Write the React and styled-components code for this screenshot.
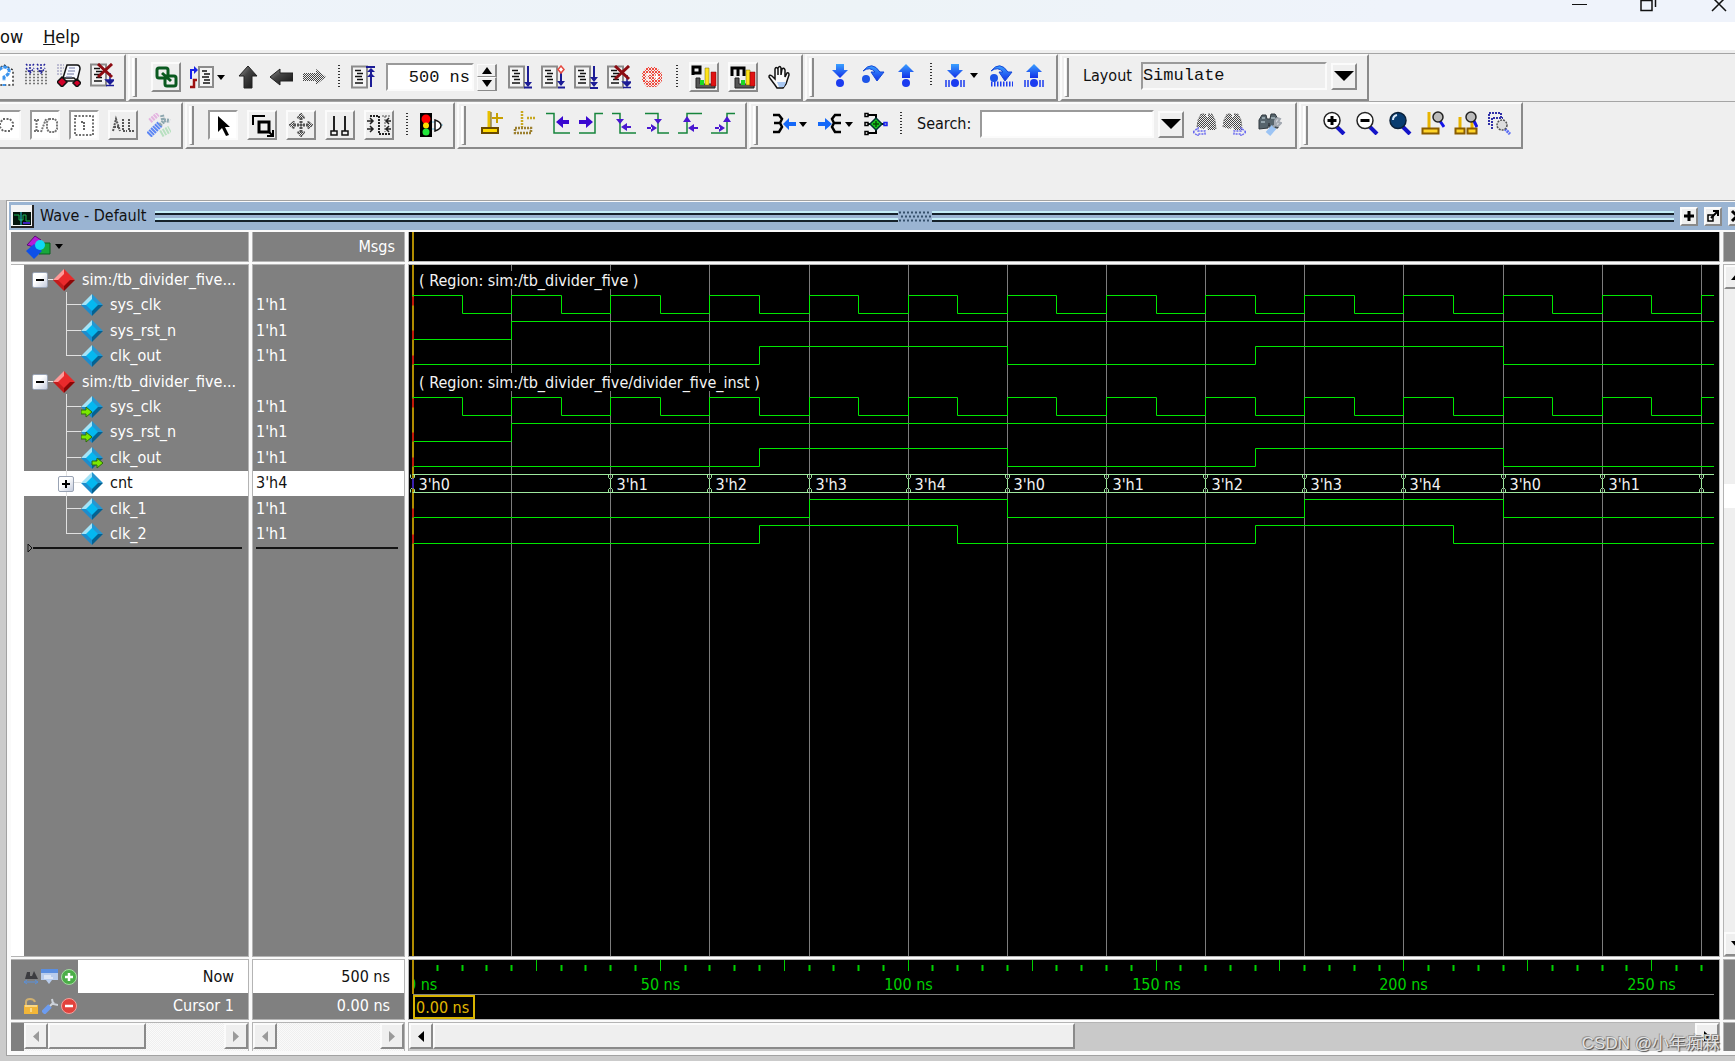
import styled, { createGlobalStyle, css } from "styled-components";

const GlobalStyle = createGlobalStyle`
  *, *::before, *::after {
    box-sizing: border-box;
  }

  body {
    margin: 0;
    overflow: hidden;
    background: #efefef;
    color: #111;
    font-family: "DejaVu Sans Condensed", "Noto Sans", sans-serif;
    font-size: 16px;
    line-height: 20px;
  }

  button, input, select {
    font: inherit;
    color: inherit;
    margin: 0;
    padding: 0;
    border: 0;
    background: none;
  }
`;

const raised = css`
  border: 2px solid;
  border-color: #fbfbfb #8a8a8a #8a8a8a #fbfbfb;
  background: #efefef;
`;

const sunken = css`
  border: 2px solid;
  border-color: #9a9a9a #fbfbfb #fbfbfb #9a9a9a;
  background: #fff;
`;

/* ---------- frame ---------- */

const Shell = styled.div`
  display: flex;
  flex-direction: column;
  height: 100vh;
  overflow: hidden;
`;

const TitleBar = styled.header`
  display: flex;
  flex: none;
  justify-content: flex-end;
  gap: 46px;
  height: 22px;
  padding-right: 4px;
  background: linear-gradient(90deg, #eef3fb, #edf3f7 50%, #eff3fb 80%);
`;

const CaptionButton = styled.button`
  display: flex;
  width: 24px;
  height: 14px;
`;

const MenuBar = styled.nav`
  display: flex;
  flex: none;
  gap: 20px;
  height: 28px;
  background: #fff;
`;

const MenuItem = styled.button`
  font-size: 18px;
  line-height: 30px;

  &::first-letter {
    text-decoration: ${(p) => (p.$hotkey ? "underline" : "none")};
  }
`;

const ToolArea = styled.div`
  flex: none;
  height: 150px;
  border-top: 3px solid #efefef;
`;

const ToolRow = styled.div`
  display: flex;
  gap: 2px;
  height: 48px;
  border-top: 1px solid #a5a5a5;
`;

const Toolbar = styled.div`
  display: flex;
  flex: none;
  padding-right: 10px;
  border: 2px solid;
  border-color: #fbfbfb #8a8a8a #8a8a8a #fbfbfb;

  &:first-child {
    border-left: 0;
  }
`;

const Grip = styled.div`
  flex: none;
  width: 5px;
  margin: 2px 14px 2px 2px;
  border: solid;
  border-width: 0 2px 1px 2px;
  border-color: #fff #8a8a8a #8a8a8a #fff;
`;

const Tools = styled.div`
  display: flex;
  align-items: center;
  align-self: flex-start;
  gap: 9px;
  margin-top: 6px;
  margin-left: ${(p) => (p.$cut ? "-9px" : 0)};
`;

const Group = styled.div`
  display: flex;
  align-items: center;
  gap: ${(p) => p.$gap || 0}px;
  margin: 0 ${(p) => p.$space || 0}px;
`;

const IconButton = styled.button`
  display: flex;
  flex: none;
  width: 24px;
  height: 26px;
  align-items: center;
  justify-content: center;
`;

const BoxButton = styled.button`
  display: flex;
  flex: none;
  width: 30px;
  height: 30px;
  align-items: center;
  justify-content: center;
  ${(p) => (p.$pressed ? sunken : raised)}
`;

const CaretButton = styled(IconButton)`
  width: 13px;
`;

const Divider = styled.div`
  width: 2px;
  height: 24px;
  margin: 0 2px 0 3px;
  background: repeating-linear-gradient(#333 0 1px, transparent 1px 3px);
`;

const RunLength = styled.input`
  width: 88px;
  height: 28px;
  padding-right: 2px;
  font-family: "Liberation Mono", monospace;
  font-size: 17px;
  text-align: right;
  ${sunken}
`;

const Spinner = styled.div`
  display: grid;
  width: 20px;
  height: 27px;
  grid-template-rows: 1fr 1fr;
`;

const SpinButton = styled.button`
  display: flex;
  align-items: center;
  justify-content: center;
  ${raised}
  border-width: 1px 2px 1px 1px;
`;

const FieldLabel = styled.label`
  margin: 0 9px 0 ${(p) => p.$indent || 0}px;
`;

const LayoutSelect = styled.select`
  width: 186px;
  height: 28px;
  appearance: none;
  font-family: "Liberation Mono", monospace;
  font-size: 17px;
  ${sunken}
  background: #efefef;
`;

const SearchInput = styled.input`
  width: 174px;
  height: 28px;
  ${sunken}
`;

const DropButton = styled.button`
  display: flex;
  width: 26px;
  height: 27px;
  margin-left: 4px;
  align-items: center;
  justify-content: center;
  ${raised}
`;

/* ---------- wave window ---------- */

const Workspace = styled.main`
  display: flex;
  flex: 1;
  min-height: 0;
  padding: 0 0 5px 6px;
  background: #cbcbcb;
`;

const WaveWindow = styled.section`
  display: flex;
  flex: 1;
  flex-direction: column;
  min-width: 0;
  padding: 1px 0 4px 2px;
  overflow: hidden;
  border: solid #a2a2a2;
  border-width: 1px 0 1px 1px;
  background: #fafafa;
`;

const WaveTitle = styled.div`
  display: flex;
  flex: none;
  align-items: center;
  height: 28px;
  margin-right: -11px;
  padding-left: 2px;
  background: #9ab4d2;
`;

const WaveName = styled.h1`
  margin: 0 9px 0 6px;
  font-size: 16px;
  font-weight: 400;
`;

const Rails = styled.div`
  display: flex;
  flex: 1;
  height: 13px;
  align-items: center;
  justify-content: center;
  background: linear-gradient(
    transparent 0 1px, #c3edf7 1px 3px, #16222c 3px 5px, transparent 5px 8px,
    #c3edf7 8px 10px, #16222c 10px 12px, transparent 12px
  );
`;

const Panes = styled.div`
  display: grid;
  flex: 1;
  min-height: 0;
  grid-template-columns: 237px 151px minmax(0, 1fr) 11px;
  gap: 5px;
  margin: 2px 0 0 2px;
  overflow: hidden;
`;

const Pane = styled.div`
  display: grid;
  min-width: 0;
  min-height: 0;
  grid-template-rows: 29px minmax(0, 1fr) 59px 28px;
  gap: 4px;
`;

const Cell = styled.div`
  position: relative;
  min-width: 0;
  min-height: 0;
  overflow: hidden;
  outline: 1px solid #b4b4b4;
  background: ${(p) => (p.$dark ? "#000" : "#808080")};
  color: #fff;
`;

const HeadCell = styled(Cell)`
  display: flex;
  align-items: center;
  padding: 0 9px 0 15px;
  justify-content: ${(p) => (p.$end ? "flex-end" : "flex-start")};
`;

const ListCell = styled(Cell)`
  border-left: ${(p) => (p.$margin ? "13px solid #fff" : 0)};
`;

const Rows = styled.ul`
  display: grid;
  height: 280px;
  margin: 2px 0 0;
  padding: 0;
  grid-auto-rows: 1fr;
  list-style: none;
`;

const SignalRow = styled.li`
  display: flex;
  align-items: center;
  padding-left: ${(p) => (p.$group ? 8 : 42)}px;
  background: ${(p) => (p.$selected ? "#fff" : "transparent")};
  color: ${(p) => (p.$selected ? "#111" : "#fff")};
`;

const ValueRow = styled(SignalRow)`
  padding-left: 3px;
`;

const Label = styled.span`
  margin-left: 7px;
  white-space: pre;
`;

const Expander = styled.button`
  display: flex;
  width: 16px;
  height: 16px;
  flex: none;
  align-items: center;
  justify-content: center;
  border: 1px solid #99a3b4;
  border-radius: 2px;
  background: linear-gradient(135deg, #fff 40%, #c4cbdc);
`;

const Stub = styled.span`
  width: 5px;
  height: 1px;
  background: #e6e6e6;
`;

const Branch = styled.span`
  position: relative;
  display: grid;
  width: 15px;
  align-self: stretch;
  grid-template-rows: 1fr 1fr;

  &::before {
    content: "";
    border: solid #e0e0e0;
    border-width: 0 0 1px 1px;
  }

  &::after {
    content: "";
    border-left: ${(p) => (p.$last ? "0" : "1px solid #e0e0e0")};
  }

  ${Expander} {
    position: absolute;
    top: 50%;
    left: -8px;
    margin-top: -7px;
  }
`;

const EndMark = styled.div`
  display: flex;
  height: 10px;
  align-items: center;
  margin: -4px 6px 0 3px;

  &::after {
    content: "";
    flex: 1;
    height: 2px;
    background: #141414;
  }
`;

const FootCell = styled(Cell)`
  display: grid;
  grid-template-rows: 33px 1fr;
`;

const FootRow = styled.div`
  display: flex;
  align-items: stretch;
  color: ${(p) => (p.$now ? "#111" : "#fff")};
`;

const FootTools = styled.div`
  display: flex;
  width: 67px;
  align-items: center;
  justify-content: flex-end;
  gap: 2px;
  padding-right: 1px;
`;

const FootText = styled.div`
  display: flex;
  flex: 1;
  align-items: center;
  justify-content: flex-end;
  padding-right: 14px;
  background: ${(p) => (p.$now ? "#fff" : "transparent")};
`;

const SmallButton = styled.button`
  display: flex;
  width: 17px;
  height: 20px;
  align-items: center;
  justify-content: center;
`;

const ScrollCell = styled(Cell)`
  display: flex;
  padding-bottom: 2px;
  border-left: ${(p) => (p.$margin ? "13px solid #808080" : 0)};
  background: ${(p) =>
    p.$active
      ? "#c9c9c9"
      : "repeating-conic-gradient(#fafafa 0 25%, #efefef 0 50%) 0 0 / 2px 2px"};
`;

const ScrollButton = styled.button`
  display: flex;
  width: 24px;
  flex: none;
  align-items: center;
  justify-content: center;
  ${raised}
`;

const Thumb = styled.div`
  width: ${(p) => p.$size};
  ${raised}
`;

const Trough = styled.div`
  flex: 1;
`;

const VScroll = styled(Cell)`
  display: flex;
  flex-direction: column;
  background: #efefef;
`;

const VButton = styled.button`
  display: flex;
  width: 24px;
  height: 24px;
  flex: none;
  align-items: center;
  justify-content: center;
  ${raised}
`;

const VGap = styled.div`
  flex: ${(p) => p.$grow};
  background: ${(p) => (p.$white ? "#fff" : "transparent")};
`;

const Plot = styled.svg`
  display: block;
  width: 100%;
  height: 100%;
  font-size: 16px;
`;

const PlotInset = styled.div`
  height: 100%;
  padding-right: 5px;
`;

const PaneButton = styled.button`
  display: flex;
  width: 18px;
  height: 19px;
  flex: none;
  margin-left: 6px;
  align-items: center;
  justify-content: center;
  ${raised}
`;

const Watermark = styled.div`
  position: absolute;
  right: 15px;
  bottom: 6px;
  color: #e2e2e2;
  font: 17px/22px "Liberation Sans", "Noto Sans CJK SC", sans-serif;
  text-shadow: 1px 1px 1px #444, -1px -1px 0 #999;
  pointer-events: none;
`;

/* ---------- icons ---------- */

const Icon = ({ size = 24, w, h, children }) => (
  <svg
    width={w || size}
    height={h || size}
    viewBox={`0 0 ${w || size} ${h || size}`}
    fill="none"
    aria-hidden="true"
  >
    {children}
  </svg>
);

const Caret = () => (
  <Icon w={8} h={5}>
    <path d="M0 0h8L4 5z" fill="#000" />
  </Icon>
);

const Triangle = ({ dir, color = "#000", w = 12, h = 8 }) => {
  const shapes = {
    up: `M0 ${h}H${w}L${w / 2} 0z`,
    down: `M0 0H${w}L${w / 2} ${h}z`,
    left: `M${w} 0V${h}L0 ${h / 2}z`,
    right: `M0 0V${h}L${w} ${h / 2}z`,
  };
  return (
    <Icon w={w} h={h}>
      <path d={shapes[dir]} fill={color} />
    </Icon>
  );
};

const Sheet = ({ x = 1 }) => (
  <>
    <path d={`M${x} 1.500h15v21h-15z`} fill="#f4f4f4" stroke="#8c8c8c" strokeWidth="2" />
    <path
      d={`M${x + 3} 5.500h6M${x + 5} 8.500h6M${x + 3} 11.500h7M${x + 5} 14.500h6M${x + 3} 18h8`}
      stroke="#111"
      strokeWidth="1.500"
    />
  </>
);

const icons = {
  help: (
    <Icon>
      <path d="M5 22V8l8-6 9 5v15z" fill="#fff" stroke="#333" strokeWidth="1.500" strokeDasharray="2 2" />
      <path d="M8 7q6-6 10 0q1 4-5 7v4M13 21v2" stroke="#3a93ee" strokeWidth="3" strokeDasharray="4 1" />
    </Icon>
  ),
  load: (
    <Icon>
      <path d="M1 8.500h22M1 11.500h22M1 14.500h22M1 17.500h22M1 20.500h22" stroke="#777" strokeWidth="1.500" strokeDasharray="2 2" />
      <path d="M6 1v8M2 5l4 5 4-5M17 1v8M13 5l4 5 4-5M2 1l2 2M10 1L8 3M13 1l2 2M21 1l-2 2" stroke="#26269c" strokeWidth="1.500" strokeDasharray="2 1" />
    </Icon>
  ),
  cart: (
    <Icon>
      <path d="M10 2h10q3 0 3 4l-3 12-3-3H6z" fill="#f6f8ff" stroke="#111" strokeWidth="1.500" />
      <path d="M12 5h6M11 8h7M10 11h7M9 14h6" stroke="#6f76a0" />
      <path d="M0 2h7M0 5h7M0 8h6M0 11h5" stroke="#8a8ab4" strokeDasharray="2 1" />
      <path d="M3 18h17" stroke="#111" strokeWidth="1.500" />
      <path d="M5 14l5 5-5 5-5-5zM20 16l4 4-4 4-4-4z" fill="#d00028" stroke="#111" strokeWidth="1.500" />
    </Icon>
  ),
  sheetX: (
    <Icon>
      <Sheet />
      <path d="M20 10v9M16 17h8l-4 4zM16 22.500h8" stroke="#1c1c96" strokeWidth="1.500" fill="#1c1c96" />
      <path d="M8 1l14 13M22 1L8 14" stroke="#8c0c12" strokeWidth="3" />
    </Icon>
  ),
  connect: (
    <Icon>
      <rect x="3" y="3" width="11" height="10" rx="2" stroke="#0a5a20" strokeWidth="3" />
      <rect x="11" y="11" width="11" height="10" rx="2" stroke="#0a5a20" strokeWidth="3" />
      <path d="M8 8l9 8" stroke="#0a5a20" strokeWidth="3" />
    </Icon>
  ),
  jump: (
    <Icon>
      <path d="M9 2h14v20H9z" fill="#f4f4f4" stroke="#8c8c8c" strokeWidth="2" />
      <path d="M12 6h5M14 9h6M12 12h7M14 15h6M13 18h7" stroke="#111" strokeWidth="1.500" />
      <path d="M1 14V5h3" stroke="#1822e8" strokeWidth="2" />
      <path d="M4 1l4 4-4 4z" fill="#1822e8" />
      <path d="M7 15H4v7H0" stroke="#9c1010" strokeWidth="2.500" />
    </Icon>
  ),
  up: (
    <Icon>
      <path d="M12 1l9 10h-5v12H8V11H3z" fill="url(#steel)" stroke="#222" />
    </Icon>
  ),
  left: (
    <Icon>
      <path d="M1 12L11 4v4h13v8H11v4z" fill="url(#steel)" stroke="#222" />
    </Icon>
  ),
  right: (
    <Icon>
      <path d="M24 12L14 4v4H1v8h13v4z" fill="url(#dots)" />
    </Icon>
  ),
  restart: (
    <Icon>
      <Sheet />
      <path d="M20 4v18M15 2h9" stroke="#1c1c96" strokeWidth="2" />
      <path d="M16 7l4-4 4 4zM16 12l4-4 4 4z" fill="#1c1c96" />
    </Icon>
  ),
  run: (
    <Icon>
      <Sheet />
      <path d="M20 1v18M16 22.500h8" stroke="#1c1c96" strokeWidth="2" />
      <path d="M16 17h8l-4 5z" fill="#1c1c96" />
    </Icon>
  ),
  runNext: (
    <Icon>
      <Sheet />
      <path d="M20 8v12M17 22.500h7" stroke="#1c1c96" strokeWidth="2" />
      <path d="M16 16h8l-4 5z" fill="#1c1c96" />
      <path d="M20 1l3 3.500L20 8l-3-3.500z" fill="#fff" stroke="#e64a40" strokeWidth="1.500" />
    </Icon>
  ),
  runAll: (
    <Icon>
      <Sheet />
      <path d="M20 1v14M16 23h8" stroke="#1c1c96" strokeWidth="2" />
      <path d="M16 12h8l-4 5zM16 17h8l-4 5z" fill="#1c1c96" />
    </Icon>
  ),
  stop: (
    <Icon>
      <path d="M7 2h9l6 6v8l-6 6H7l-5-6V8z" fill="url(#redDots)" />
      <path d="M7 9h4M7 9v6h4M14 12h5M16.500 9v6" stroke="#fff" strokeWidth="1.500" />
    </Icon>
  ),
  profile: (
    <Icon w={26} h={26}>
      <path d="M5 24V14h4v6h15v4z" fill="#555" stroke="#222" />
      <path d="M9 16h4v5H9z" fill="#19d824" />
      <path d="M14 4h4v17h-4z" fill="#ffe31a" stroke="#776c00" strokeWidth=".5" />
      <path d="M20 8h5v14h-5z" fill="#e01212" stroke="#700" strokeWidth=".5" />
      <path d="M2 11V3h7v6H3" stroke="#000" strokeWidth="3" />
    </Icon>
  ),
  memory: (
    <Icon w={26} h={26}>
      <path d="M5 24V14h4v6h15v4z" fill="#555" stroke="#222" />
      <path d="M11 16h4v5h-4z" fill="#19d824" />
      <path d="M16 6h4v15h-4z" fill="#ffe31a" stroke="#776c00" strokeWidth=".5" />
      <path d="M20 8h5v14h-5z" fill="#e01212" stroke="#700" strokeWidth=".5" />
      <path d="M2 12V4h12v8M8 4v8" stroke="#000" strokeWidth="3" />
    </Icon>
  ),
  hand: (
    <Icon>
      <path
        d="M8 20L2 12q0-3 3-1l3 3V4q1-3 3 0v6-7q2-3 3 0v7l1-6q2-2 3 1v7l2-4q2-1 2 2l-3 9-3 4H10z"
        fill="#fafafa"
        stroke="#111"
        strokeWidth="1.500"
      />
      <path d="M10 17h9l-2 5h-5z" fill="#a9c8f2" />
    </Icon>
  ),
  stepIn: (
    <Icon>
      <path d="M8 1h8v6h4l-8 8-8-8h4z" fill="url(#blue)" />
      <circle cx="12" cy="20" r="4" fill="#1b3cf0" />
    </Icon>
  ),
  stepOver: (
    <Icon>
      <path d="M2 8Q11-3 19 9h4l-7 9-6-9h4Q9 3 2 8z" fill="url(#blue)" stroke="#1447d8" />
      <circle cx="5" cy="16" r="4" fill="#1d55e8" />
    </Icon>
  ),
  stepOut: (
    <Icon>
      <path d="M12 1l8 8h-4v6H8V9H4z" fill="url(#blue)" />
      <circle cx="12" cy="20" r="4" fill="#1b3cf0" />
    </Icon>
  ),
  stepInBars: (
    <Icon>
      <path d="M8 1h8v6h4l-8 8-8-8h4z" fill="url(#blue)" />
      <circle cx="12" cy="20" r="4" fill="#1b3cf0" />
      <path d="M3 17v7M6 17v7M18 17v7M21 17v7" stroke="#1b3cf0" strokeWidth="1.500" />
    </Icon>
  ),
  stepOverBars: (
    <Icon>
      <path d="M2 8Q11-3 19 9h4l-7 9-6-9h4Q9 3 2 8z" fill="url(#blue)" stroke="#1447d8" />
      <circle cx="5" cy="15" r="4" fill="#1d55e8" />
      <path d="M2 21h22" stroke="#1b3cf0" strokeWidth="5" strokeDasharray="1.500 1.500" />
    </Icon>
  ),
  stepOutBars: (
    <Icon>
      <path d="M12 1l8 8h-4v6H8V9H4z" fill="url(#blue)" />
      <circle cx="12" cy="20" r="4" fill="#1b3cf0" />
      <path d="M3 17v7M6 17v7M18 17v7M21 17v7" stroke="#1b3cf0" strokeWidth="1.500" />
    </Icon>
  ),
  ring: (
    <Icon>
      <path d="M9 6h7l3 4v4l-3 4H9l-3-4v-4z" stroke="#666" strokeWidth="2" strokeDasharray="2 1.500" />
    </Icon>
  ),
  inOut: (
    <Icon w={26} h={24}>
      <path d="M2 7h5M4.500 7v11M2 18h5M9 19l5-13M17 6h6l2 3v7l-2 3h-6l-2-3V9z" stroke="#777" strokeWidth="2" strokeDasharray="2 1" />
    </Icon>
  ),
  internal: (
    <Icon>
      <path d="M3 3h18v19H3z" stroke="#444" strokeWidth="1.500" strokeDasharray="2 1.500" />
      <path d="M9 9h3v9" stroke="#666" strokeWidth="2" strokeDasharray="2 1" />
    </Icon>
  ),
  all: (
    <Icon>
      <path d="M2 18l3-12 4 12M3 14h5M12 6v12h4M18 6v12h5" stroke="#555" strokeWidth="2" strokeDasharray="2 1" />
    </Icon>
  ),
  tools: (
    <Icon>
      <path d="M3 8l8-7" stroke="#e4b4e0" strokeWidth="5" strokeDasharray="2 1" />
      <path d="M14 21l9-5" stroke="#b8e0c0" strokeWidth="7" strokeDasharray="2 1" />
      <path d="M2 22L13 11" stroke="#5c86f4" strokeWidth="7" strokeDasharray="2 .7" />
      <path d="M13 12l5-5M15 2l1 5 7 1" stroke="#8fa8b0" strokeWidth="4" strokeDasharray="2 1" />
    </Icon>
  ),
  pointer: (
    <Icon>
      <path d="M7 3v16l4-4 4 8 3-1-4-8h5z" fill="#000" />
    </Icon>
  ),
  zoomBox: (
    <Icon>
      <path d="M3 12V3h12" stroke="#000" strokeWidth="2" />
      <path d="M9 9h10v10H9z" stroke="#000" strokeWidth="3" />
      <path d="M18 18l5 5M23 17v6h-6" stroke="#000" strokeWidth="2" />
    </Icon>
  ),
  pan: (
    <Icon>
      <path d="M12 0l4 5H8zM12 24l4-5H8zM0 12l5-4v8zM24 12l-5-4v8z" fill="url(#dots)" stroke="#444" strokeDasharray="2 1" />
      <path d="M12 5v14M5 12h14" stroke="#555" strokeWidth="3" strokeDasharray="2 1" />
    </Icon>
  ),
  twoBars: (
    <Icon>
      <path d="M6 3v15M17 3v15" stroke="#222" strokeWidth="2" />
      <path d="M3 18h6v4H3zM14 18h6v4h-6z" stroke="#111" strokeWidth="1.500" />
    </Icon>
  ),
  editWave: (
    <Icon>
      <path d="M3 3h9v18h12" stroke="#222" strokeWidth="2" strokeDasharray="2 1" />
      <path d="M15 3h8M18 3v16" stroke="#555" strokeDasharray="2 1" />
      <path d="M0 8h5M0 16h5M19 8h5M19 16h5M3 5l3 3-3 3M3 13l3 3-3 3M22 5l-3 3 3 3M22 13l-3 3 3 3" stroke="#222" strokeWidth="1.500" />
    </Icon>
  ),
  light: (
    <Icon>
      <path d="M1 0h12v24H1z" fill="#000" />
      <circle cx="7" cy="6" r="4.500" fill="#f00" />
      <circle cx="7" cy="12.500" r="3" fill="#ffdf00" />
      <circle cx="7" cy="19" r="3.500" fill="#22e63a" />
      <path d="M13 9h3M13 16h3M21 12h3" stroke="#65b7d8" />
      <path d="M16 7v11q6-2 6-5.500T16 7z" fill="#fff" stroke="#111" strokeWidth="1.500" />
    </Icon>
  ),
  cursorAdd: (
    <Icon>
      <path d="M9 0v16" stroke="#e8c000" strokeWidth="3" />
      <path d="M11 1v15" stroke="#6b5500" />
      <path d="M2 17h16v5H2z" fill="#ffd900" stroke="#6b4b00" strokeWidth="2" />
      <path d="M17 2v10M12 7h11" stroke="#c8a000" strokeWidth="2" />
    </Icon>
  ),
  cursorDel: (
    <Icon>
      <path d="M9 0v16M14 7h8" stroke="#c8a820" strokeWidth="2.500" strokeDasharray="2 1" />
      <path d="M2 17h16v5H2z" stroke="#9c8030" strokeWidth="2.500" strokeDasharray="2 1" />
    </Icon>
  ),
  prevEdge: (
    <Icon>
      <path d="M0 2.500h8V22h16" stroke="#16853c" strokeWidth="1.500" />
      <path d="M10 11l7-6v4h6v4h-6v4z" fill="#3a08d0" />
    </Icon>
  ),
  nextEdge: (
    <Icon>
      <path d="M0 22h16V2.500h8" stroke="#16853c" strokeWidth="1.500" />
      <path d="M14 11L7 5v4H0v4h7v4z" fill="#3a08d0" />
    </Icon>
  ),
  prevFall: (
    <Icon>
      <path d="M0 2.500h8V22h16" stroke="#16853c" strokeWidth="1.500" />
      <path d="M4 8h8l-4 5zM9 16l6-4v8zM14 15h5v2h-5z" fill="#4a18d0" />
    </Icon>
  ),
  nextFall: (
    <Icon>
      <path d="M0 2.500h13V22h11" stroke="#16853c" strokeWidth="1.500" />
      <path d="M9 8h8l-4 5zM12 17l-6-4v8zM2 16h5v2H2z" fill="#4a18d0" />
    </Icon>
  ),
  prevRise: (
    <Icon>
      <path d="M0 22h9V2.500h15" stroke="#16853c" strokeWidth="1.500" />
      <path d="M5 11h8L9 5zM10 17l6-4v8zM15 16h5v2h-5z" fill="#4a18d0" />
    </Icon>
  ),
  nextRise: (
    <Icon>
      <path d="M0 22h16V2.500h8" stroke="#16853c" strokeWidth="1.500" />
      <path d="M12 11h8l-4-6zM14 17l-6-4v8zM4 16h5v2H4z" fill="#4a18d0" />
    </Icon>
  ),
  drivers: (
    <Icon>
      <path d="M1 3h6l3 4-2 4H2h6l2 4-3 5H1" stroke="#000" strokeWidth="2.500" />
      <path d="M11 12l6-6v4h7v4h-7v4z" fill="#1468f8" />
    </Icon>
  ),
  readers: (
    <Icon>
      <path d="M23 3h-6l-3 4 2 4h7-7l-2 4 3 5h6" stroke="#000" strokeWidth="2.500" />
      <path d="M14 12L7 6v4H0v4h7v4z" fill="#1468f8" />
    </Icon>
  ),
  expandNet: (
    <Icon>
      <path d="M4 3h8v18H4M4 12h16" stroke="#000" strokeWidth="2" />
      <path d="M1 1.500h3v3H1zM1 10.500h3v3H1zM1 19.500h3v3H1z" fill="#fff" stroke="#000" strokeWidth="1.500" />
      <path d="M12 6l6 6-6 6-6-6z" fill="#19c81c" stroke="#033" strokeWidth="1.500" />
      <path d="M12 9v6M9 12h6" stroke="#044c04" strokeWidth="1.500" />
      <path d="M20 10.500h3v3h-3z" fill="#9ac" stroke="#1a22f0" strokeWidth="1.500" />
    </Icon>
  ),
  findPrev: (
    <Icon>
      <path d="M4 15l1-7 3-6h5v3h2V2h4l3 6 1 10h-8l-1-4-3 3z" fill="url(#dots)" />
      <path d="M4 15l1-7 3-6h4M15 2h4l3 6 1 9" stroke="#777" strokeDasharray="2 1" />
      <path d="M0 20l5-4v3h7v3H5v2z" stroke="#6a6af0" strokeWidth="1.500" strokeDasharray="2 1" />
    </Icon>
  ),
  findNext: (
    <Icon>
      <path d="M1 15l1-7 3-6h5v3h2V2h4l3 6 1 10h-8l-1-4-3 3z" fill="url(#dots)" />
      <path d="M1 15l1-7 3-6h4M12 2h4l3 6 1 8" stroke="#777" strokeDasharray="2 1" />
      <path d="M24 20l-5-4v3h-7v3h7v2z" stroke="#6a6af0" strokeWidth="1.500" strokeDasharray="2 1" />
    </Icon>
  ),
  findOptions: (
    <Icon>
      <path d="M1 17V8l3-5h4l1 4h3l1-5h4l3 5v9h-8l-1-5-1 5z" fill="#56646c" stroke="#30383e" />
      <path d="M3 10h4M4 6h3M13 6h4" stroke="#a8b8c0" strokeWidth="1.500" />
      <path d="M10 22l6-7" stroke="#9cc4f4" strokeWidth="6" />
      <path d="M15 15l4-4M17 9q1-4 5-2l-2 3 3 1-3 3-3-1z" stroke="#a2a8b0" strokeWidth="2" fill="#d0d4da" />
    </Icon>
  ),
  zoomIn: (
    <Icon>
      <path d="M15 16l7 7" stroke="#1414c8" strokeWidth="4" />
      <circle cx="10" cy="9.500" r="8" fill="#fff" stroke="#222" strokeWidth="1.500" />
      <path d="M5.500 9.500h9M10 5v9" stroke="#000" strokeWidth="3" />
    </Icon>
  ),
  zoomOut: (
    <Icon>
      <path d="M15 16l7 7" stroke="#1414c8" strokeWidth="4" />
      <circle cx="10" cy="9.500" r="8" fill="#fff" stroke="#222" strokeWidth="1.500" />
      <path d="M5.500 9.500h9" stroke="#000" strokeWidth="3" />
    </Icon>
  ),
  zoomFull: (
    <Icon>
      <path d="M15 16l7 7" stroke="#1414c8" strokeWidth="4" />
      <circle cx="10" cy="9.500" r="8" fill="#083c70" stroke="#0a2038" strokeWidth="1.500" />
      <path d="M5 9q0-4 4-5" stroke="#d8e8f8" strokeWidth="2" />
    </Icon>
  ),
  zoomCursor: (
    <Icon>
      <path d="M8 1v16" stroke="#e8b400" strokeWidth="3" />
      <path d="M1.500 17.500h16v5h-16z" fill="#ffd428" stroke="#8a5c00" strokeWidth="2" />
      <path d="M19 10l4 6" stroke="#1414e8" strokeWidth="3" />
      <circle cx="17" cy="6" r="5" fill="#bbb" stroke="#222" strokeWidth="1.500" />
    </Icon>
  ),
  zoomCursors: (
    <Icon>
      <path d="M6 6v12M18 8v10" stroke="#e8b400" strokeWidth="3" />
      <path d="M1.500 17.500h9v5h-9zM13.500 17.500h9v5h-9z" fill="#ffd428" stroke="#8a5c00" strokeWidth="2" />
      <path d="M20 10l3 6" stroke="#1414e8" strokeWidth="3" />
      <circle cx="17" cy="6" r="5" fill="#bbb" stroke="#222" strokeWidth="1.500" />
    </Icon>
  ),
  zoomArea: (
    <Icon>
      <path d="M2 14V2h12v5M5 18V7h11" stroke="#3030a8" strokeWidth="2" strokeDasharray="2 1" />
      <path d="M18 18l5 5" stroke="#5a6cf4" strokeWidth="3" strokeDasharray="2 .7" />
      <circle cx="15" cy="14" r="5" fill="#ddd" stroke="#555" strokeWidth="1.500" strokeDasharray="2 1" />
    </Icon>
  ),
};

const HiddenSvg = styled.svg`
  position: absolute;
`;

const Defs = () => (
  <HiddenSvg width="0" height="0" aria-hidden="true">
    <defs>
      <linearGradient id="steel" x1="0" y1="0" x2="1" y2="1">
        <stop offset="0" stopColor="#999" />
        <stop offset=".4" stopColor="#444" />
        <stop offset="1" stopColor="#111" />
      </linearGradient>
      <linearGradient id="blue" x1="0" y1="0" x2="0" y2="1">
        <stop offset="0" stopColor="#3aa0ff" />
        <stop offset="1" stopColor="#1230e8" />
      </linearGradient>
      <pattern id="dots" width="2" height="2" patternUnits="userSpaceOnUse">
        <path d="M0 0h1v1H0zM1 1h1v1H1z" fill="#444" />
      </pattern>
      <pattern id="redDots" width="3" height="3" patternUnits="userSpaceOnUse">
        <path d="M0 0h2v2H0zM2 2h1v1H2z" fill="#f04a3e" />
      </pattern>
    </defs>
  </HiddenSvg>
);

const gem = {
  blue: ["#a4e4f8", "#2596d0", "#1e8ccc", "#046292", "#04b8f0"],
  red: ["#ff9a98", "#e62c2c", "#c41c1c", "#8c0606", "#ea2a2c"],
};

const Gem = ({ color, port }) => {
  const [nw, ne, sw, se, mid] = gem[color];
  return (
    <Icon size={22}>
      <path d="M11 0v11H0z" fill={nw} />
      <path d="M11 0v11h11z" fill={ne} />
      <path d="M0 11h11v11z" fill={sw} />
      <path d="M22 11H11v11z" fill={se} />
      <path d="M11 5l6 6-6 6-6-6z" fill={mid} />
      {port === "in" && <path d="M0 14h5v-3l6 5-6 5v-3H0z" fill="#7be800" stroke="#2e6a10" />}
      {port === "out" && <path d="M11 14h5v-3l6 5-6 5v-3h-5z" fill="#7be800" stroke="#2e6a10" />}
    </Icon>
  );
};

const WaveLogo = () => (
  <Icon w={23} h={23}>
    <path d="M0 0h22v22H0z" fill="#f4f4f4" />
    <path d="M22 0v22H0" stroke="#222" strokeWidth="2" />
    <path d="M2 7h18v13H2z" fill="#04140c" />
    <path d="M3 10h5v5h4v-5h3v6h4" stroke="#18b050" />
    <path d="M10 7v13" stroke="#20c8d8" />
    <path d="M12 18h7" stroke="#4020c0" strokeWidth="2" />
  </Icon>
);

const ShapesIcon = () => (
  <Icon w={26} h={24}>
    <path d="M1 10l8-9 6 4-7 7z" fill="#b41cd8" stroke="#5c0a78" />
    <path d="M13 8h11v11H13z" fill="#18a83c" stroke="#0a6020" />
    <path d="M8 9l8 7-8 8-8-8z" fill="#0e50e8" />
    <circle cx="14" cy="10" r="5" fill="#10d8f4" />
  </Icon>
);

/* ---------- data ---------- */

const signals = [
  { name: "sim:/tb_divider_five...", group: true, region: "( Region: sim:/tb_divider_five )", cover: 230 },
  { name: "sys_clk", value: "1'h1", kind: "clock" },
  { name: "sys_rst_n", value: "1'h1", start: 0, edges: [20] },
  { name: "clk_out", value: "1'h1", start: 0, edges: [70, 120, 170, 220], last: true },
  { name: "sim:/tb_divider_five...", group: true, region: "( Region: sim:/tb_divider_five/divider_five_inst )", cover: 358 },
  { name: "sys_clk", value: "1'h1", kind: "clock", port: "in" },
  { name: "sys_rst_n", value: "1'h1", start: 0, edges: [20], port: "in" },
  { name: "clk_out", value: "1'h1", start: 0, edges: [70, 120, 170, 220], port: "out" },
  { name: "cnt", value: "3'h4", kind: "bus", selected: true },
  { name: "clk_1", value: "1'h1", start: 0, edges: [80, 120, 180, 220] },
  { name: "clk_2", value: "1'h1", start: 0, edges: [70, 110, 170, 210], last: true },
];

const clockEdges = Array.from({ length: 26 }, (_, i) => (i + 1) * 10);
const busEdges = [0, 40, 60, 80, 100, 120, 140, 160, 180, 200, 220, 240, 260];
const ROW = 280 / 11;
const ORIGIN = 4;
const toX = (ns) => Math.round(ORIGIN + ns * 4.957) - 0.5;
const END = 4000;

const tracePath = (edges, start, hi, lo) => {
  let level = start;
  let d = `M${toX(0)} ${level ? hi : lo}`;
  edges.forEach((ns) => {
    level = 1 - level;
    d += `H${toX(ns)}V${level ? hi : lo}`;
  });
  // the clock keeps its last level until the view ends
  return `${d}H${END}`;
};

const Trace = ({ signal, index }) => {
  const top = 2 + index * ROW;
  const hi = Math.round(top + 3) + 0.5;
  const lo = hi + 18;

  if (signal.group) {
    return (
      <>
        <rect x={ORIGIN + 2} y={Math.round(top) + 4} width={signal.cover} height="18" fill="#000" />
        <text x={ORIGIN + 6} y={Math.round(top) + 19} fill="#f4f4f4">
          {signal.region}
        </text>
      </>
    );
  }

  if (signal.kind === "bus") {
    return (
      <>
        <path d={`M${toX(0)} ${hi}H${END}M${toX(0)} ${lo}H${END}`} stroke="#9ee89e" />
        {busEdges.map((ns, i) => (
          <g key={ns}>
            <path
              d={`M${toX(ns) - 2} ${hi}v3l2 2v8l-2 2v3M${toX(ns) + 2} ${hi}v3l-2 2v8l2 2v3`}
              stroke="#9ee89e"
            />
            {i < busEdges.length - 1 && (
              <text x={toX(ns) + 6} y={hi + 15} fill="#f4f4f4">
                {`3'h${i % 5}`}
              </text>
            )}
          </g>
        ))}
        <path d={`M${ORIGIN} ${hi + 4}v10`} stroke="#3a20b0" strokeWidth="2" />
      </>
    );
  }

  const clock = signal.kind === "clock";
  return (
    <>
      <path
        d={clock ? tracePath(clockEdges, 1, hi, lo) : tracePath(signal.edges, signal.start, hi, lo)}
        stroke="#00e800"
      />
      <path d={`M${ORIGIN} ${clock ? hi + 1 : lo - 9}v9`} stroke="#c01808" strokeWidth="2" />
    </>
  );
};

const WavePlot = () => (
  <Plot role="img" aria-label="Waveforms" fill="none">
    {Array.from({ length: 14 }, (_, i) => (
      <path key={i} d={`M${toX((i + 1) * 20)} 0V2000`} stroke="#7c7c7c" />
    ))}
    <path d={`M${ORIGIN} 0V2000`} stroke="#b08c00" strokeWidth="2" />
    {signals.map((signal, i) => (
      <Trace key={i} signal={signal} index={i} />
    ))}
  </Plot>
);

const Timeline = () => (
  <Plot role="img" aria-label="Time axis" fill="none">
    {Array.from({ length: 52 }, (_, i) => {
      const ns = (i + 1) * 5;
      return (
        <path key={ns} d={`M${toX(ns)} ${ns % 25 ? 5 : 0}V11`} stroke="#00d000" strokeWidth={ns % 25 ? 2 : 1} />
      );
    })}
    <text x="-2" y="30" fill="#00d000">0 ns</text>
    <path d="M0 14h4v18H0z" fill="#000" />
    {[50, 100, 150, 200, 250].map((ns) => (
      <text key={ns} x={toX(ns)} y="30" fill="#00d000" textAnchor="middle">
        {ns} ns
      </text>
    ))}
    <path d={`M${ORIGIN} 34.500H${END}`} stroke="#808080" />
    <path d={`M${ORIGIN} 0V34`} stroke="#b08c00" strokeWidth="2" />
    <rect x={ORIGIN + 1} y="36" width="60" height="22" stroke="#d8b400" strokeWidth="2" />
    <text x={ORIGIN + 3} y="53" fill="#e0b800">0.00 ns</text>
  </Plot>
);

const Tool = ({ icon, label, caret }) => {
  const button = (
    <IconButton type="button" aria-label={label}>
      {icons[icon]}
    </IconButton>
  );
  if (!caret) return button;
  return (
    <Group>
      {button}
      <CaretButton type="button" aria-label={`${label} options`}>
        <Caret />
      </CaretButton>
    </Group>
  );
};

const BoxTool = ({ icon, label, pressed }) => (
  <BoxButton type="button" aria-label={label} $pressed={pressed}>
    {icons[icon]}
  </BoxButton>
);

const HScroll = ({ margin, active, thumb, label }) => {
  const color = active ? "#000" : "#9a9a9a";
  return (
    <ScrollCell $margin={margin} $active={active}>
      <ScrollButton type="button" aria-label={`${label} left`}>
        <Triangle dir="left" color={color} w={6} h={11} />
      </ScrollButton>
      {thumb && <Thumb $size={thumb} />}
      <Trough />
      <ScrollButton type="button" aria-label={`${label} right`}>
        <Triangle dir="right" color={color} w={6} h={11} />
      </ScrollButton>
    </ScrollCell>
  );
};

const NamesPane = () => (
  <Pane>
    <HeadCell>
      <ShapesIcon />
      <CaretButton type="button" aria-label="Object filter">
        <Caret />
      </CaretButton>
    </HeadCell>
    <ListCell $margin>
      <Rows>
        {signals.map((s, i) => (
          <SignalRow key={i} $group={s.group} $selected={s.selected}>
            {s.group ? (
              <>
                <Expander type="button" aria-label="Collapse">
                  <Icon w={8} h={8}>
                    <path d="M0 4h8" stroke="#000" strokeWidth="2" />
                  </Icon>
                </Expander>
                <Stub />
              </>
            ) : (
              <Branch $last={s.last}>
                {s.kind === "bus" && (
                  <Expander type="button" aria-label="Expand">
                    <Icon w={8} h={8}>
                      <path d="M0 4h8M4 0v8" stroke="#000" strokeWidth="2" />
                    </Icon>
                  </Expander>
                )}
              </Branch>
            )}
            <Gem color={s.group ? "red" : "blue"} port={s.port} />
            <Label>{s.name}</Label>
          </SignalRow>
        ))}
      </Rows>
      <EndMark>
        <Icon w={6} h={10}>
          <path d="M1 1v8l4-4z" stroke="#141414" />
        </Icon>
      </EndMark>
    </ListCell>
    <FootCell>
      <FootRow $now>
        <FootTools>
          <SmallButton type="button" aria-label="Find cursor">
            <Icon size={16}>
              <path d="M2 10l2-7h3v4h2l2-5 4 8z" fill="#3c3c40" />
              <path d="M1 13h14M4 11l-3 2 3 2M12 11l3 2-3 2" stroke="#5a90d8" />
            </Icon>
          </SmallButton>
          <SmallButton type="button" aria-label="Cursor details">
            <Icon size={17}>
              <path d="M0 1h17v11h-6l-3 4-3-4H0z" fill="#b8ccec" />
              <path d="M0 1h17v4H0z" fill="#5a8ee0" />
              <path d="M3 8h7M3 10h9" stroke="#fff" />
            </Icon>
          </SmallButton>
          <SmallButton type="button" aria-label="Insert cursor">
            <Icon size={16}>
              <circle cx="8" cy="8" r="7.500" fill="#4cae48" stroke="#a4dca0" />
              <path d="M8 4v8M4 8h8" stroke="#fff" strokeWidth="2.500" />
            </Icon>
          </SmallButton>
        </FootTools>
        <FootText $now>Now</FootText>
      </FootRow>
      <FootRow>
        <FootTools>
          <SmallButton type="button" aria-label="Lock cursor">
            <Icon size={16}>
              <path d="M3 7V4q0-3 4-3t5 3" stroke="#d0b070" strokeWidth="2" />
              <path d="M1 7h14v9H1z" fill="#f2b638" />
              <path d="M2 8h12M8 10v4" stroke="#fbe2a0" strokeWidth="1.500" />
            </Icon>
          </SmallButton>
          <SmallButton type="button" aria-label="Edit cursor">
            <Icon size={16}>
              <path d="M1 15l7-7" stroke="#6c9cf0" strokeWidth="5" />
              <path d="M8 8l4-4M10 1l1 5 5 1" stroke="#ccd2da" strokeWidth="2" />
            </Icon>
          </SmallButton>
          <SmallButton type="button" aria-label="Delete cursor">
            <Icon size={16}>
              <circle cx="8" cy="8" r="7.500" fill="#e2423c" stroke="#f4a09c" />
              <path d="M4 8h8" stroke="#fff" strokeWidth="2.500" />
            </Icon>
          </SmallButton>
        </FootTools>
        <FootText>Cursor 1</FootText>
      </FootRow>
    </FootCell>
    <HScroll margin thumb="98px" label="Scroll names" />
  </Pane>
);

const ValuesPane = () => (
  <Pane>
    <HeadCell $end>Msgs</HeadCell>
    <ListCell>
      <Rows>
        {signals.map((s, i) => (
          <ValueRow key={i} $selected={s.selected}>
            {s.value}
          </ValueRow>
        ))}
      </Rows>
      <EndMark />
    </ListCell>
    <FootCell>
      <FootRow $now>
        <FootText $now>500 ns</FootText>
      </FootRow>
      <FootRow>
        <FootText>0.00 ns</FootText>
      </FootRow>
    </FootCell>
    <HScroll label="Scroll values" />
  </Pane>
);

const WavesPane = () => (
  <Pane>
    <Cell $dark>
      <Plot aria-hidden="true">
        <path d={`M${ORIGIN} 0V30`} stroke="#b08c00" strokeWidth="2" />
      </Plot>
    </Cell>
    <Cell $dark>
      <PlotInset>
        <WavePlot />
      </PlotInset>
    </Cell>
    <Cell $dark>
      <PlotInset>
        <Timeline />
      </PlotInset>
    </Cell>
    <HScroll active thumb="49%" label="Scroll waves" />
  </Pane>
);

const ScrollPane = () => (
  <Pane>
    <Cell />
    <VScroll>
      <VButton type="button" aria-label="Scroll up">
        <Triangle dir="up" w={10} h={6} />
      </VButton>
      <VGap $grow={195} />
      <VGap $grow={24} $white />
      <VGap $grow={424} />
      <VButton type="button" aria-label="Scroll down">
        <Triangle dir="down" w={10} h={6} />
      </VButton>
    </VScroll>
    <Cell />
    <Cell />
  </Pane>
);

const App = () => {
  return (
    <Shell>
      <GlobalStyle />
      <Defs />
      <TitleBar>
        <CaptionButton type="button" aria-label="Minimize">
          <Icon w={24} h={14}>
            <path d="M5 4.500h15" stroke="#111" />
          </Icon>
        </CaptionButton>
        <CaptionButton type="button" aria-label="Restore">
          <Icon w={24} h={14}>
            <path d="M4 0v10.500h11V0M4 .5h11M18.500 0v7" stroke="#111" strokeWidth="1.500" />
          </Icon>
        </CaptionButton>
        <CaptionButton type="button" aria-label="Close">
          <Icon w={24} h={14}>
            <path d="M5 -3L19 11M19 -3L5 11" stroke="#111" strokeWidth="1.500" />
          </Icon>
        </CaptionButton>
      </TitleBar>
      <MenuBar>
        <MenuItem type="button">ow</MenuItem>
        <MenuItem type="button" $hotkey>Help</MenuItem>
      </MenuBar>

      <ToolArea>
        <ToolRow>
          <Toolbar>
            <Tools $cut>
              <Tool icon="help" label="Help" />
              <Tool icon="load" label="Load" />
              <Tool icon="cart" label="Compile" />
              <Tool icon="sheetX" label="Break" />
            </Tools>
          </Toolbar>
          <Toolbar>
            <Grip />
            <Tools>
              <BoxTool icon="connect" label="Environment" />
              <Tool icon="jump" label="Go to" caret />
              <Tool icon="up" label="Up" />
              <Tool icon="left" label="Back" />
              <Tool icon="right" label="Forward" />
              <Divider />
              <Tool icon="restart" label="Restart" />
              <Group $gap={3} $space={2}>
                <RunLength aria-label="Run length" defaultValue="500 ns" />
                <Spinner>
                  <SpinButton type="button" aria-label="Increase">
                    <Triangle dir="up" w={10} h={7} />
                  </SpinButton>
                  <SpinButton type="button" aria-label="Decrease">
                    <Triangle dir="down" w={10} h={7} />
                  </SpinButton>
                </Spinner>
              </Group>
              <Tool icon="run" label="Run" />
              <Tool icon="runNext" label="Continue run" />
              <Tool icon="runAll" label="Run all" />
              <Tool icon="sheetX" label="Break run" />
              <Tool icon="stop" label="Stop" />
              <Divider />
              <BoxTool icon="profile" label="Performance profiling" />
              <BoxTool icon="memory" label="Memory profiling" />
              <Tool icon="hand" label="Edit breakpoints" />
            </Tools>
          </Toolbar>
          <Toolbar>
            <Grip />
            <Tools>
              <Tool icon="stepIn" label="Step into" />
              <Tool icon="stepOver" label="Step over" />
              <Tool icon="stepOut" label="Step out" />
              <Divider />
              <Tool icon="stepInBars" label="Step into current" caret />
              <Tool icon="stepOverBars" label="Step over current" />
              <Tool icon="stepOutBars" label="Step out current" />
            </Tools>
          </Toolbar>
          <Toolbar>
            <Grip />
            <Tools>
              <Group>
                <FieldLabel htmlFor="layout">Layout</FieldLabel>
                <LayoutSelect id="layout" defaultValue="Simulate">
                  <option>Simulate</option>
                </LayoutSelect>
                <DropButton type="button" aria-label="Choose layout">
                  <Triangle dir="down" w={20} h={10} />
                </DropButton>
              </Group>
            </Tools>
          </Toolbar>
        </ToolRow>

        <ToolRow>
          <Toolbar>
            <Tools $cut>
              <BoxTool icon="ring" label="Outputs" pressed />
              <BoxTool icon="inOut" label="Inouts" pressed />
              <BoxTool icon="internal" label="Internals" pressed />
              <BoxTool icon="all" label="All" />
              <Tool icon="tools" label="Filter settings" />
            </Tools>
          </Toolbar>
          <Toolbar>
            <Grip />
            <Tools>
              <BoxTool icon="pointer" label="Select mode" pressed />
              <BoxTool icon="zoomBox" label="Zoom mode" />
              <BoxTool icon="pan" label="Pan mode" />
              <BoxTool icon="twoBars" label="Two cursor mode" />
              <BoxTool icon="editWave" label="Edit mode" />
              <Divider />
              <Tool icon="light" label="Stop drawing" />
            </Tools>
          </Toolbar>
          <Toolbar>
            <Grip />
            <Tools>
              <Tool icon="cursorAdd" label="Insert cursor" />
              <Tool icon="cursorDel" label="Delete cursor" />
              <Tool icon="prevEdge" label="Previous transition" />
              <Tool icon="nextEdge" label="Next transition" />
              <Tool icon="prevFall" label="Previous falling edge" />
              <Tool icon="nextFall" label="Next falling edge" />
              <Tool icon="prevRise" label="Previous rising edge" />
              <Tool icon="nextRise" label="Next rising edge" />
            </Tools>
          </Toolbar>
          <Toolbar>
            <Grip />
            <Tools>
              <Tool icon="drivers" label="Show drivers" caret />
              <Tool icon="readers" label="Show readers" caret />
              <Tool icon="expandNet" label="Expand net" />
              <Divider />
              <Group>
                <FieldLabel htmlFor="search" $indent={4}>Search:</FieldLabel>
                <SearchInput id="search" />
                <DropButton type="button" aria-label="Search history">
                  <Triangle dir="down" w={20} h={10} />
                </DropButton>
              </Group>
              <Group $gap={5}>
                <Tool icon="findPrev" label="Search backward" />
                <Tool icon="findNext" label="Search forward" />
              </Group>
              <Group $space={3}>
                <Tool icon="findOptions" label="Search options" />
              </Group>
            </Tools>
          </Toolbar>
          <Toolbar>
            <Grip />
            <Tools>
              <Tool icon="zoomIn" label="Zoom in" />
              <Tool icon="zoomOut" label="Zoom out" />
              <Tool icon="zoomFull" label="Zoom full" />
              <Tool icon="zoomCursor" label="Zoom on cursor" />
              <Tool icon="zoomCursors" label="Zoom between cursors" />
              <Tool icon="zoomArea" label="Zoom range" />
            </Tools>
          </Toolbar>
        </ToolRow>
      </ToolArea>

      <Workspace>
        <WaveWindow>
          <WaveTitle>
            <WaveLogo />
            <WaveName>Wave - Default</WaveName>
            <Rails>
              <Icon w={34} h={13}>
                <path d="M0 0h34v13H0z" fill="#9ab4d2" />
                <path d="M1 2.500h32M3 6.500h30M1 10.500h32" stroke="#35506c" strokeWidth="2" strokeDasharray="2 2" />
              </Icon>
            </Rails>
            <PaneButton type="button" aria-label="Maximize pane">
              <Icon size={14}>
                <path d="M7 2v10M2 7h10" stroke="#000" strokeWidth="3" />
              </Icon>
            </PaneButton>
            <PaneButton type="button" aria-label="Undock pane">
              <Icon size={14}>
                <path d="M2 6h5v6H2z" stroke="#000" strokeWidth="1.500" />
                <path d="M5 9l7-7M7 2h5v5" stroke="#000" strokeWidth="2" />
              </Icon>
            </PaneButton>
            <PaneButton type="button" aria-label="Close pane">
              <Icon size={14}>
                <path d="M2 2l10 10M12 2L2 12" stroke="#000" strokeWidth="3" />
              </Icon>
            </PaneButton>
          </WaveTitle>
          <Panes>
            <NamesPane />
            <ValuesPane />
            <WavesPane />
            <ScrollPane />
          </Panes>
        </WaveWindow>
      </Workspace>
      <Watermark>CSDN @小年痴槑</Watermark>
    </Shell>
  );
};

export default App;
